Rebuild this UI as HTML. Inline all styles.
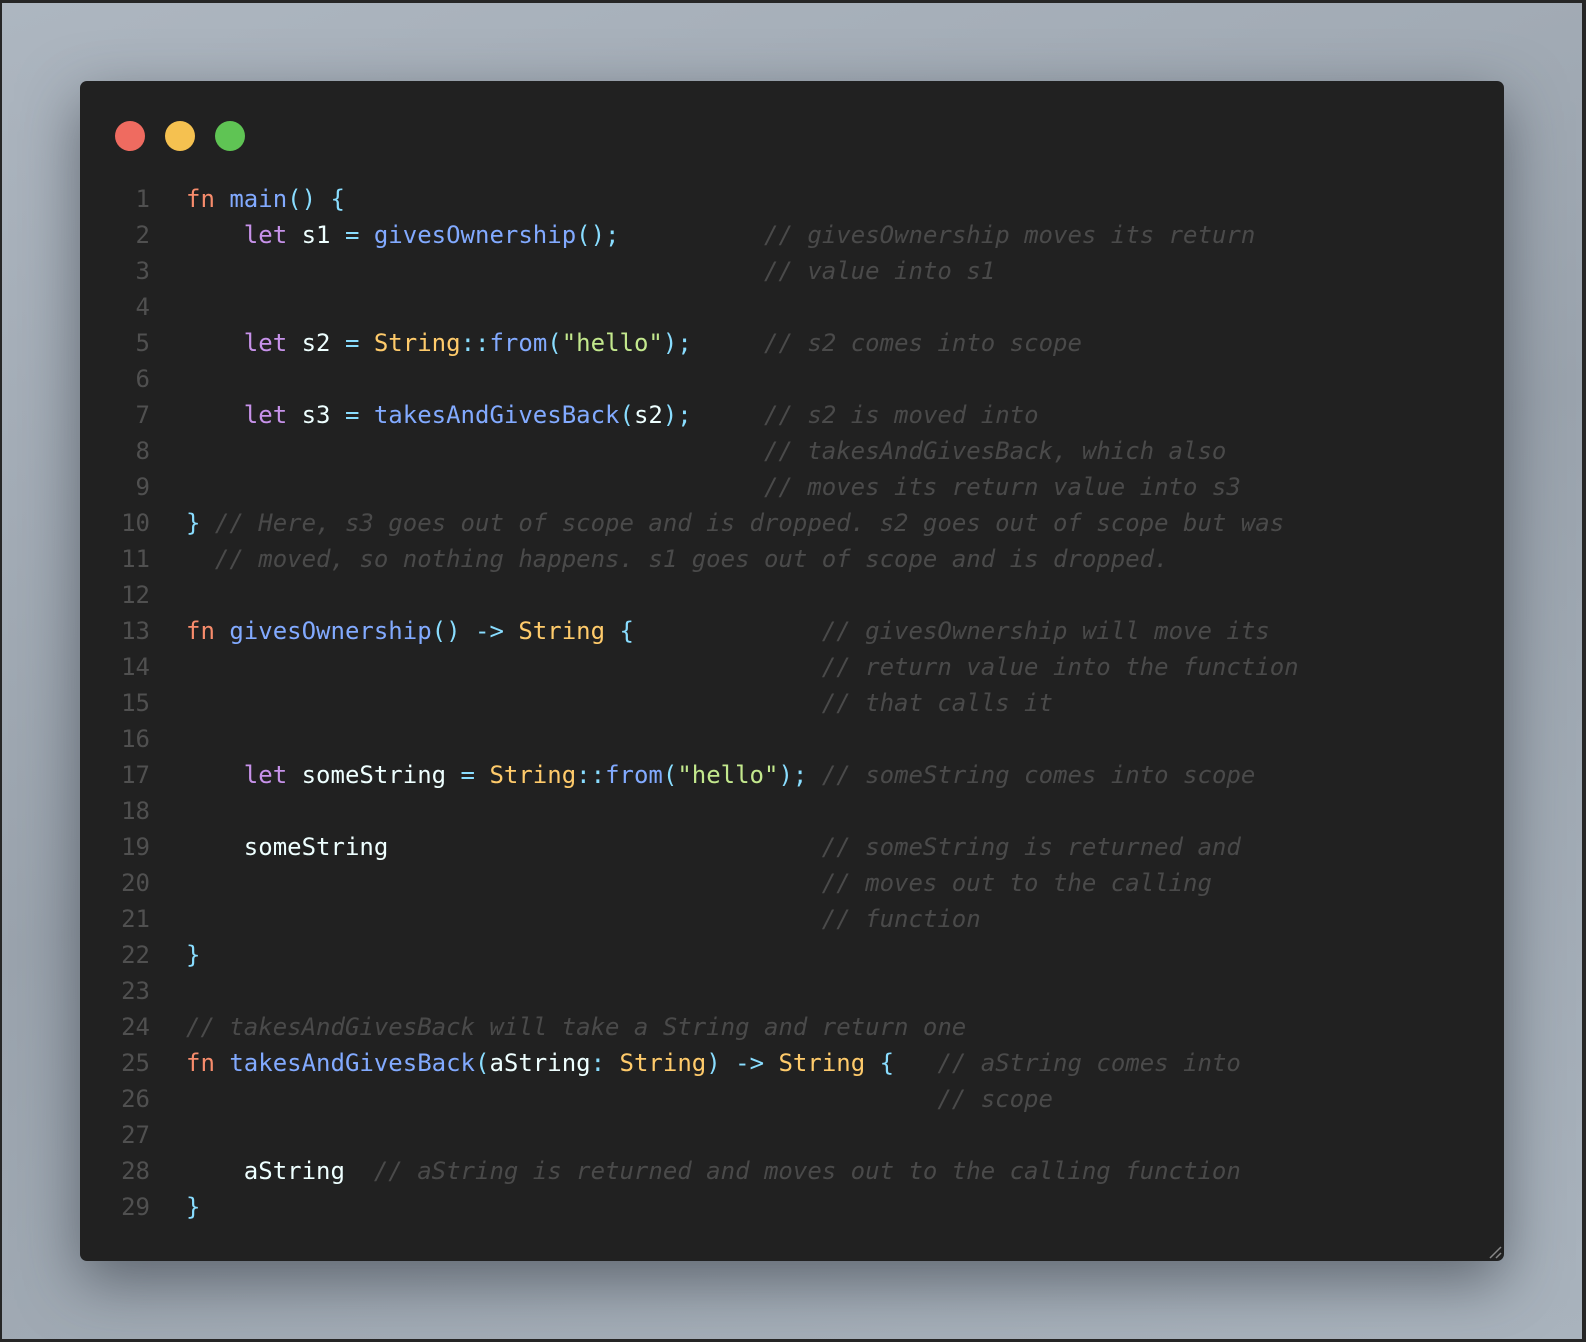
<!DOCTYPE html>
<html><head><meta charset="utf-8"><style>
html,body{margin:0;padding:0;}
body{width:1586px;height:1342px;background:#262626;position:relative;overflow:hidden;}
.bg{position:absolute;left:2px;top:3px;right:4px;bottom:3px;background:linear-gradient(160deg,#adb6c0 0%,#9aa3ad 50%,#a9b3bd 100%);}
.card{position:absolute;left:80px;top:81px;width:1424px;height:1180px;background:#212121;border-radius:7px;box-shadow:0 20px 60px rgba(40,45,55,.55);}
.dot{position:absolute;top:40px;width:30px;height:30px;border-radius:50%;}
pre{position:absolute;margin:0;font-family:"DejaVu Sans Mono","Liberation Mono",monospace;font-size:24px;line-height:36px;white-space:pre;}
.ln{left:110px;top:181px;width:40px;text-align:right;color:#505050;}
.code{left:186px;top:181px;color:#eeffff;}
.k{color:#f78c6c}.f{color:#82aaff}.l{color:#c792ea}.p{color:#89ddff}.t{color:#ffcb6b}.s{color:#c3e88d}
.c{color:#4a4a4a;font-style:italic}
</style></head><body>
<div class="bg"></div>
<div class="card">
<div class="dot" style="left:35px;background:#ef6b60"></div>
<div class="dot" style="left:85px;background:#f5c150"></div>
<div class="dot" style="left:135px;background:#5fc454"></div>
<svg style="position:absolute;right:2px;bottom:2px" width="14" height="14"><path d="M2 13L13 2M8 13L13 8" stroke="#888" stroke-width="1.5"/></svg>
</div>
<pre class="ln">1
2
3
4
5
6
7
8
9
10
11
12
13
14
15
16
17
18
19
20
21
22
23
24
25
26
27
28
29</pre>
<pre class="code"><span class="k">fn</span> <span class="f">main</span><span class="p">() {</span>
    <span class="l">let</span> s1 <span class="p">=</span> <span class="f">givesOwnership</span><span class="p">();</span>          <span class="c">// givesOwnership moves its return</span>
                                        <span class="c">// value into s1</span>

    <span class="l">let</span> s2 <span class="p">=</span> <span class="t">String</span><span class="p">::</span><span class="f">from</span><span class="p">(</span><span class="s">"hello"</span><span class="p">);</span>     <span class="c">// s2 comes into scope</span>

    <span class="l">let</span> s3 <span class="p">=</span> <span class="f">takesAndGivesBack</span><span class="p">(</span>s2<span class="p">);</span>     <span class="c">// s2 is moved into</span>
                                        <span class="c">// takesAndGivesBack, which also</span>
                                        <span class="c">// moves its return value into s3</span>
<span class="p">}</span> <span class="c">// Here, s3 goes out of scope and is dropped. s2 goes out of scope but was</span>
  <span class="c">// moved, so nothing happens. s1 goes out of scope and is dropped.</span>

<span class="k">fn</span> <span class="f">givesOwnership</span><span class="p">() -></span> <span class="t">String</span> <span class="p">{</span>             <span class="c">// givesOwnership will move its</span>
                                            <span class="c">// return value into the function</span>
                                            <span class="c">// that calls it</span>

    <span class="l">let</span> someString <span class="p">=</span> <span class="t">String</span><span class="p">::</span><span class="f">from</span><span class="p">(</span><span class="s">"hello"</span><span class="p">);</span> <span class="c">// someString comes into scope</span>

    someString                              <span class="c">// someString is returned and</span>
                                            <span class="c">// moves out to the calling</span>
                                            <span class="c">// function</span>
<span class="p">}</span>

<span class="c">// takesAndGivesBack will take a String and return one</span>
<span class="k">fn</span> <span class="f">takesAndGivesBack</span><span class="p">(</span>aString<span class="p">:</span> <span class="t">String</span><span class="p">) -></span> <span class="t">String</span> <span class="p">{</span>   <span class="c">// aString comes into</span>
                                                    <span class="c">// scope</span>

    aString  <span class="c">// aString is returned and moves out to the calling function</span>
<span class="p">}</span></pre>
</body></html>
